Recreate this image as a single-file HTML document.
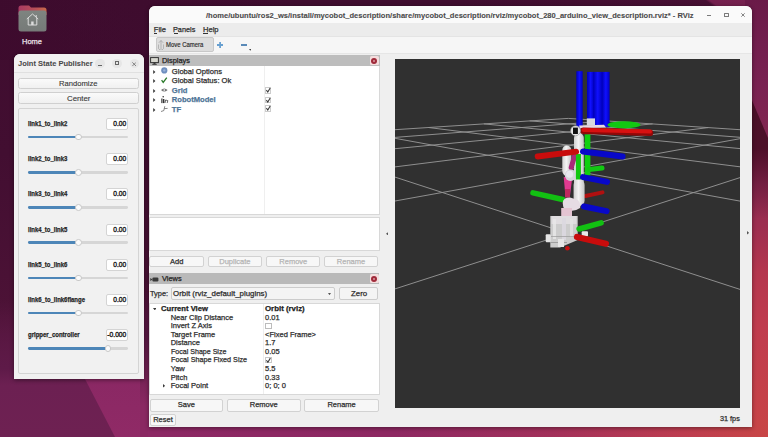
<!DOCTYPE html>
<html><head><meta charset="utf-8">
<style>
*{margin:0;padding:0;box-sizing:border-box}
html,body{width:768px;height:437px;overflow:hidden}
body{position:relative;font-family:"Liberation Sans",sans-serif;color:#222;background:#4a1238}
.a{position:absolute}
.t{position:absolute;white-space:nowrap;line-height:1;transform-origin:0 50%;-webkit-text-stroke:0.25px currentColor}
</style></head><body>
<div class="a" style="left:0;top:0;width:768px;height:437px;background:linear-gradient(180deg,#3f0d2f 0%,#420e31 35%,#4c1236 70%,#5a1640 85%,#6a1e4e 100%)"></div>
<div class="a" style="left:0;top:0;width:768px;height:60px;background:linear-gradient(90deg,rgba(60,10,44,.6) 0%,rgba(60,10,44,0) 40%,rgba(80,18,56,.0) 60%,rgba(80,18,56,.5) 100%)"></div>
<div class="a" style="left:600px;top:0;width:168px;height:80px;background:radial-gradient(circle 131px at 190px -100px,#7e2454 0%,#74204e 98%,rgba(70,16,52,0) 100%)"></div>
<div class="a" style="left:745px;top:0;width:23px;height:437px;background:linear-gradient(180deg,#6a1a48 0%,#721e4e 10%,#7a2252 20%,#82264f 32%,#8c2a50 42%,#9e2e50 52%,#b4364e 62%,#c03c4e 75%,#c84446 100%)"></div>
<div class="a" style="left:745px;top:0;width:23px;height:437px;background:linear-gradient(180deg,rgba(70,14,38,.3) 19%,#4a1028 23%,#4e1029 34%,rgba(90,20,50,.5) 42%,rgba(140,40,70,0) 50%);clip-path:polygon(0 84px,23px 138px,23px 437px,0 437px)"></div>
<div class="a" style="left:0;top:300px;width:150px;height:137px;background:linear-gradient(180deg,rgba(90,24,68,0) 0%,#5e1a48 50%,#6c2052 62%,#6e2152 100%)"></div>
<div class="a" style="left:0;top:379px;width:150px;height:58px;background:linear-gradient(180deg,#8a2864,#902a66);clip-path:polygon(85px 0,150px 0,150px 58px,115px 58px)"></div>
<div class="a" style="left:140px;top:280px;width:10px;height:157px;background:linear-gradient(180deg,rgba(74,18,54,0) 0%,#5a1844 35%,#7a2458 65%,#8a2862 80%)"></div>
<div class="a" style="left:148px;top:420px;width:620px;height:17px;background:linear-gradient(90deg,#8c2864 0%,#8e2862 40%,#a2305a 65%,#bc3c50 85%,#c84646 100%)"></div>
<svg class="a" style="left:17.5px;top:5px" width="29" height="27" viewBox="0 0 29 27">
<defs><linearGradient id="ft" x1="0" x2="1"><stop offset="0" stop-color="#a83a62"></stop><stop offset=".6" stop-color="#b85058"></stop><stop offset="1" stop-color="#c86a4a"></stop></linearGradient>
<linearGradient id="fb" x1="0" x2="0" y1="0" y2="1"><stop offset="0" stop-color="#7e8480"></stop><stop offset="1" stop-color="#767a78"></stop></linearGradient></defs>
<path d="M0.5 3 Q0.5 0.5 3 0.5 L11 0.5 L13 2.5 L26 2.5 Q28.5 2.5 28.5 5 L28.5 10 L0.5 10 Z" fill="url(#ft)"></path>
<rect x="0.5" y="5.5" width="28" height="21" rx="2.5" fill="url(#fb)"></rect>
<path d="M8.8 14 L14.5 9 L20.2 14 M10.2 13 V20 H18.8 V13 M18.2 10 V12" stroke="#dcdcdc" stroke-width="1" fill="none"></path>
<rect x="13.2" y="16.5" width="2.4" height="3.5" fill="#dcdcdc"></rect>
</svg>
<div class="t" style="left: 21.9px; top: 37.5px; font-size: 7.6px; font-weight: normal; color: rgb(236, 228, 234); transform: scaleX(0.985);">Home</div>
<div class="a" style="left:13.5px;top:54px;width:130px;height:324.8px;background:#f0f0f0;border-radius:6px 6px 0 0;box-shadow:0 1px 4px rgba(0,0,0,.45)"></div>
<div class="a" style="left:13.5px;top:54px;width:130px;height:18.6px;background:#f1f1f1;border-radius:6px 6px 0 0;border-bottom:0.8px solid #e0e0e0"></div>
<div class="t" style="left: 17.8px; top: 60px; font-size: 7.6px; font-weight: bold; color: rgb(72, 72, 72); -webkit-text-stroke: 0.05px currentcolor; transform: scaleX(0.987);">Joint State Publisher</div>
<div class="a" style="left:95.4px;top:58.8px;width:9.2px;height:9.2px;border-radius:50%;background:#e6e6e6"></div>
<div class="a" style="left:112.4px;top:58.8px;width:9.2px;height:9.2px;border-radius:50%;background:#e6e6e6"></div>
<div class="a" style="left:129.6px;top:58.8px;width:9.2px;height:9.2px;border-radius:50%;background:#e6e6e6"></div>
<div class="a" style="left:98.3px;top:64.6px;width:3.6px;height:0.8px;background:#666"></div>
<div class="a" style="left:115px;top:61.4px;width:4px;height:4px;border:0.7px solid #666"></div>
<svg class="a" style="left:132px;top:61.5px" width="4.4" height="4.4" viewBox="0 0 4 4"><path d="M0.3 0.3 L3.7 3.7 M3.7 0.3 L0.3 3.7" stroke="#666" stroke-width="0.7"></path></svg>
<div class="a" style="left:18.2px;top:77.5px;width:120.5px;height:11.799999999999997px;background:linear-gradient(#fafafa,#f0f0f0);border:1px solid #d0d0d0;border-radius:2.5px"></div>
<div class="t" style="left: 59.4px; top: 79.9px; font-size: 7.6px; font-weight: normal; color: rgb(56, 56, 56); -webkit-text-stroke: 0.12px currentcolor; transform: scaleX(1.003);">Randomize</div>
<div class="a" style="left:18.2px;top:92.2px;width:120.5px;height:12.0px;background:linear-gradient(#fafafa,#f0f0f0);border:1px solid #d0d0d0;border-radius:2.5px"></div>
<div class="t" style="left: 66.6px; top: 94.7px; font-size: 7.6px; font-weight: normal; color: rgb(56, 56, 56); -webkit-text-stroke: 0.12px currentcolor; transform: scaleX(1.03);">Center</div>
<div class="a" style="left:18.2px;top:108px;width:120.5px;height:266px;border:0.8px solid #d4d4d4;border-radius:2px;background:#f1f1f1"></div>
<div class="t" style="left: 28.1px; top: 120.85px; font-size: 6.7px; font-weight: bold; color: rgb(38, 38, 38); transform: scaleX(0.889);">link1_to_link2</div>
<div class="a" style="left:105.7px;top:118px;width:22.5px;height:12px;background:#fff;border:1px solid #d4d4d4;border-radius:2px"></div>
<div class="t" style="left:126.3px;top:120.85px;font-size:6.7px;font-weight:normal;color:#222;transform:translateX(-100%);-webkit-text-stroke:0.35px currentColor;">0.00</div>
<div class="a" style="left:28.1px;top:135.6px;width:100px;height:2.8px;background:#d6d6d6;border-radius:1.4px"></div>
<div class="a" style="left:28.1px;top:135.6px;width:50.199999999999996px;height:2.8px;background:#4d86b8;border-radius:1.4px"></div>
<div class="a" style="left:74.89999999999999px;top:133.6px;width:6.8px;height:6.8px;border-radius:50%;background:#fbfbfb;border:0.6px solid #c8c8c8"></div>
<div class="t" style="left: 28.1px; top: 156.25px; font-size: 6.7px; font-weight: bold; color: rgb(38, 38, 38); transform: scaleX(0.889);">link2_to_link3</div>
<div class="a" style="left:105.7px;top:153.4px;width:22.5px;height:12px;background:#fff;border:1px solid #d4d4d4;border-radius:2px"></div>
<div class="t" style="left:126.3px;top:156.25px;font-size:6.7px;font-weight:normal;color:#222;transform:translateX(-100%);-webkit-text-stroke:0.35px currentColor;">0.00</div>
<div class="a" style="left:28.1px;top:171.0px;width:100px;height:2.8px;background:#d6d6d6;border-radius:1.4px"></div>
<div class="a" style="left:28.1px;top:171.0px;width:50.199999999999996px;height:2.8px;background:#4d86b8;border-radius:1.4px"></div>
<div class="a" style="left:74.89999999999999px;top:169.0px;width:6.8px;height:6.8px;border-radius:50%;background:#fbfbfb;border:0.6px solid #c8c8c8"></div>
<div class="t" style="left: 28.1px; top: 191.25px; font-size: 6.7px; font-weight: bold; color: rgb(38, 38, 38); transform: scaleX(0.889);">link3_to_link4</div>
<div class="a" style="left:105.7px;top:188.4px;width:22.5px;height:12px;background:#fff;border:1px solid #d4d4d4;border-radius:2px"></div>
<div class="t" style="left:126.3px;top:191.25px;font-size:6.7px;font-weight:normal;color:#222;transform:translateX(-100%);-webkit-text-stroke:0.35px currentColor;">0.00</div>
<div class="a" style="left:28.1px;top:206.0px;width:100px;height:2.8px;background:#d6d6d6;border-radius:1.4px"></div>
<div class="a" style="left:28.1px;top:206.0px;width:50.199999999999996px;height:2.8px;background:#4d86b8;border-radius:1.4px"></div>
<div class="a" style="left:74.89999999999999px;top:204.0px;width:6.8px;height:6.8px;border-radius:50%;background:#fbfbfb;border:0.6px solid #c8c8c8"></div>
<div class="t" style="left: 28.1px; top: 226.65px; font-size: 6.7px; font-weight: bold; color: rgb(38, 38, 38); transform: scaleX(0.889);">link4_to_link5</div>
<div class="a" style="left:105.7px;top:223.8px;width:22.5px;height:12px;background:#fff;border:1px solid #d4d4d4;border-radius:2px"></div>
<div class="t" style="left:126.3px;top:226.65px;font-size:6.7px;font-weight:normal;color:#222;transform:translateX(-100%);-webkit-text-stroke:0.35px currentColor;">0.00</div>
<div class="a" style="left:28.1px;top:241.1px;width:100px;height:2.8px;background:#d6d6d6;border-radius:1.4px"></div>
<div class="a" style="left:28.1px;top:241.1px;width:50.199999999999996px;height:2.8px;background:#4d86b8;border-radius:1.4px"></div>
<div class="a" style="left:74.89999999999999px;top:239.1px;width:6.8px;height:6.8px;border-radius:50%;background:#fbfbfb;border:0.6px solid #c8c8c8"></div>
<div class="t" style="left: 28.1px; top: 261.85px; font-size: 6.7px; font-weight: bold; color: rgb(38, 38, 38); transform: scaleX(0.889);">link5_to_link6</div>
<div class="a" style="left:105.7px;top:259px;width:22.5px;height:12px;background:#fff;border:1px solid #d4d4d4;border-radius:2px"></div>
<div class="t" style="left:126.3px;top:261.85px;font-size:6.7px;font-weight:normal;color:#222;transform:translateX(-100%);-webkit-text-stroke:0.35px currentColor;">0.00</div>
<div class="a" style="left:28.1px;top:276.70000000000005px;width:100px;height:2.8px;background:#d6d6d6;border-radius:1.4px"></div>
<div class="a" style="left:28.1px;top:276.70000000000005px;width:50.199999999999996px;height:2.8px;background:#4d86b8;border-radius:1.4px"></div>
<div class="a" style="left:74.89999999999999px;top:274.70000000000005px;width:6.8px;height:6.8px;border-radius:50%;background:#fbfbfb;border:0.6px solid #c8c8c8"></div>
<div class="t" style="left: 28.1px; top: 297.25px; font-size: 6.7px; font-weight: bold; color: rgb(38, 38, 38); transform: scaleX(0.891);">link6_to_link6flange</div>
<div class="a" style="left:105.7px;top:294.4px;width:22.5px;height:12px;background:#fff;border:1px solid #d4d4d4;border-radius:2px"></div>
<div class="t" style="left:126.3px;top:297.25px;font-size:6.7px;font-weight:normal;color:#222;transform:translateX(-100%);-webkit-text-stroke:0.35px currentColor;">0.00</div>
<div class="a" style="left:28.1px;top:311.70000000000005px;width:100px;height:2.8px;background:#d6d6d6;border-radius:1.4px"></div>
<div class="a" style="left:28.1px;top:311.70000000000005px;width:50.199999999999996px;height:2.8px;background:#4d86b8;border-radius:1.4px"></div>
<div class="a" style="left:74.89999999999999px;top:309.70000000000005px;width:6.8px;height:6.8px;border-radius:50%;background:#fbfbfb;border:0.6px solid #c8c8c8"></div>
<div class="t" style="left: 28.1px; top: 332.25px; font-size: 6.7px; font-weight: bold; color: rgb(38, 38, 38); transform: scaleX(0.895);">gripper_controller</div>
<div class="a" style="left:105.7px;top:329.4px;width:22.5px;height:12px;background:#fff;border:1px solid #d4d4d4;border-radius:2px"></div>
<div class="t" style="left:126.3px;top:332.25px;font-size:6.7px;font-weight:normal;color:#222;transform:translateX(-100%);-webkit-text-stroke:0.35px currentColor;">-0.000</div>
<div class="a" style="left:28.1px;top:347.1px;width:100px;height:2.8px;background:#d6d6d6;border-radius:1.4px"></div>
<div class="a" style="left:28.1px;top:347.1px;width:80.0px;height:2.8px;background:#4d86b8;border-radius:1.4px"></div>
<div class="a" style="left:104.69999999999999px;top:345.1px;width:6.8px;height:6.8px;border-radius:50%;background:#fbfbfb;border:0.6px solid #c8c8c8"></div>
<div class="a" style="left:148.5px;top:5.5px;width:603.5px;height:421px;background:#efefef;border-radius:6px 6px 0 0;box-shadow:0 1px 4px rgba(0,0,0,.45)"></div>
<div class="a" style="left:148.5px;top:5.5px;width:603.5px;height:17px;background:#fafafa;border-radius:6px 6px 0 0"></div>
<div class="t" style="left: 206.4px; top: 12px; font-size: 8px; font-weight: bold; color: rgb(74, 74, 74); -webkit-text-stroke: 0.1px currentcolor; transform: scaleX(0.941);">/home/ubuntu/ros2_ws/install/mycobot_description/share/mycobot_description/rviz/mycobot_280_arduino_view_description.rviz* - RViz</div>
<div class="a" style="left:707px;top:15px;width:4.3px;height:0.7px;background:#7a7a7a"></div>
<div class="a" style="left:724px;top:12.6px;width:4.8px;height:4.2px;border:0.6px solid #7a7a7a;border-radius:0.5px"></div>
<svg class="a" style="left:741.4px;top:12.5px" width="4" height="4" viewBox="0 0 4 4"><path d="M0.3 0.3 L3.7 3.7 M3.7 0.3 L0.3 3.7" stroke="#666" stroke-width="0.8"></path></svg>
<div class="a" style="left:148.5px;top:22.5px;width:603.5px;height:13px;background:#ececec"></div>
<div class="t" style="left: 153.75px; top: 26.2px; font-size: 7.6px; font-weight: normal; color: rgb(46, 46, 46); transform: scaleX(1);">File</div>
<div class="t" style="left: 173.3px; top: 26.2px; font-size: 7.6px; font-weight: normal; color: rgb(46, 46, 46); transform: scaleX(0.961);">Panels</div>
<div class="t" style="left: 202.9px; top: 26.2px; font-size: 7.6px; font-weight: normal; color: rgb(46, 46, 46); transform: scaleX(0.994);">Help</div>
<div class="a" style="left:153.9px;top:33.4px;width:3.6px;height:0.7px;background:#333"></div>
<div class="a" style="left:173.5px;top:33.4px;width:4.2px;height:0.7px;background:#333"></div>
<div class="a" style="left:203.1px;top:33.4px;width:4.6px;height:0.7px;background:#333"></div>
<div class="a" style="left:148.5px;top:35.5px;width:603.5px;height:18.8px;background:#f6f6f6;border-top:0.8px solid #e4e4e4;border-bottom:0.8px solid #e6e6e6"></div>
<div class="a" style="left:155.6px;top:37.2px;width:58.1px;height:15.2px;background:#dddddd;border:1px solid #c8c8c8;border-radius:2px"></div>
<div class="t" style="left: 165.6px; top: 41.9px; font-size: 6.6px; font-weight: normal; color: rgb(42, 42, 42); -webkit-text-stroke: 0.15px currentcolor; transform: scaleX(0.902);">Move Camera</div>
<svg class="a" style="left:156.8px;top:39.5px" width="8" height="11" viewBox="0 0 8 11" fill="none" stroke="#8a8a8a" stroke-width="0.5"><path d="M4 0.5 L4 10 M1.8 2.8 L4 0.5 L6.2 2.8 M1.5 4.5 L1.5 8.5 L3 10 M6.5 4.5 L6.5 8.5 L5 10"></path></svg>
<svg class="a" style="left:217px;top:41.7px" width="6.2" height="6" viewBox="0 0 6.2 6"><path d="M2.2 0 H4 V2.1 H6.2 V3.9 H4 V6 H2.2 V3.9 H0 V2.1 H2.2Z" fill="#68a0d0"></path></svg>
<div class="a" style="left:240.6px;top:44px;width:6.5px;height:1.6px;background:#5a8ab8"></div>
<svg class="a" style="left:248.6px;top:49.4px" width="2.6" height="1.8" viewBox="0 0 2.6 1.8"><path d="M0 0 L2.6 0 L1.3 1.8Z" fill="#444"></path></svg>
<div class="a" style="left:148.5px;top:55.3px;width:231px;height:10.7px;background:#bdbdbd"></div>
<div class="t" style="left: 162.1px; top: 56.95px; font-size: 7.5px; font-weight: normal; color: rgb(34, 34, 34); transform: scaleX(0.986);">Displays</div>
<svg class="a" style="left:150px;top:56.8px" width="9" height="8" viewBox="0 0 9 8"><rect x="0.6" y="0.6" width="7.8" height="5" fill="#d8d8d0" stroke="#333" stroke-width="1"></rect><rect x="3.5" y="5.6" width="2" height="1.3" fill="#333"></rect><rect x="2.3" y="6.8" width="4.4" height="1" fill="#333"></rect></svg>
<div class="a" style="left:369.6px;top:56px;width:9px;height:9px;border-radius:1.5px;background:#f4dede"></div>
<div class="a" style="left:371.1px;top:57.5px;width:6px;height:6px;border-radius:50%;background:#a02a3a"></div>
<div class="a" style="left:373.1px;top:59.5px;width:2px;height:2px;border-radius:50%;background:#d89aa0"></div>
<div class="a" style="left:148.5px;top:66px;width:231px;height:148.8px;background:#fff;border:1px solid #d8d8d8;border-top:none"></div>
<div class="a" style="left:263.5px;top:66px;width:0.8px;height:148px;background:#efefef"></div>
<svg class="a" style="left:160px;top:66px" width="10" height="48" viewBox="0 0 10 48"><circle cx="4.3" cy="4.4" r="3.1" fill="#6f8fbf"></circle><circle cx="4.3" cy="4.4" r="1.2" fill="#9ab4dc"></circle><path d="M1.6 14.2 L3.2 16.4 L6.8 11.6" stroke="#2a7a2a" stroke-width="1.3" fill="none"></path><path d="M1 24 Q4.2 21 7.6 24 Q4.2 27 1 24Z" fill="#707070"></path><circle cx="4.3" cy="24" r="0.9" fill="#ddd"></circle><circle cx="3.2" cy="30.8" r="0.8" fill="#333"></circle><rect x="1.3" y="32.5" width="1.2" height="4.6" fill="#333"></rect><rect x="3" y="33" width="1.4" height="4.1" fill="#333"></rect><path d="M5 37 L5.6 34 L7.8 34.6 L7.2 37" stroke="#444" stroke-width="0.8" fill="none"></path><path d="M1 45.5 L3.8 44.6 L4.8 40.2 M4.3 42.6 L7.6 42.4" stroke="#555" stroke-width="0.7" fill="none"></path></svg>
<svg class="a" style="left:152.8px;top:69.60px" width="3" height="4" viewBox="0 0 3 4"><path d="M0.2 0 L2.4 2 L0.2 4Z" fill="#3a3a3a"></path></svg>
<div class="t" style="left:171.8px;top:67.70px;font-size:7.6px;font-weight:normal;color:#2e2e2e;">Global Options</div>
<svg class="a" style="left:152.8px;top:79.10px" width="3" height="4" viewBox="0 0 3 4"><path d="M0.2 0 L2.4 2 L0.2 4Z" fill="#3a3a3a"></path></svg>
<div class="t" style="left:171.8px;top:77.20px;font-size:7.6px;font-weight:normal;color:#2e2e2e;">Global Status: Ok</div>
<svg class="a" style="left:152.8px;top:88.70px" width="3" height="4" viewBox="0 0 3 4"><path d="M0.2 0 L2.4 2 L0.2 4Z" fill="#3a3a3a"></path></svg>
<div class="t" style="left:171.8px;top:86.80px;font-size:7.6px;font-weight:bold;color:#4f7597;">Grid</div>
<svg class="a" style="left:152.8px;top:98.20px" width="3" height="4" viewBox="0 0 3 4"><path d="M0.2 0 L2.4 2 L0.2 4Z" fill="#3a3a3a"></path></svg>
<div class="t" style="left:171.8px;top:96.30px;font-size:7.6px;font-weight:bold;color:#4f7597;">RobotModel</div>
<svg class="a" style="left:152.8px;top:107.70px" width="3" height="4" viewBox="0 0 3 4"><path d="M0.2 0 L2.4 2 L0.2 4Z" fill="#3a3a3a"></path></svg>
<div class="t" style="left:171.8px;top:105.80px;font-size:7.6px;font-weight:bold;color:#4f7597;">TF</div>
<div class="a" style="left:265.1px;top:87.39999999999999px;width:6.4px;height:6.4px;background:#fff;border:0.7px solid #cccccc"></div>
<svg class="a" style="left:265.1px;top:87.40px" width="6.4" height="6.4" viewBox="0 0 6.4 6.4"><path d="M1.4 3.1 L2.8 5.1 L5.2 1.1" stroke="#3a3a3a" stroke-width="1.05" fill="none"></path></svg>
<div class="a" style="left:265.1px;top:96.6px;width:6.4px;height:6.4px;background:#fff;border:0.7px solid #cccccc"></div>
<svg class="a" style="left:265.1px;top:96.60px" width="6.4" height="6.4" viewBox="0 0 6.4 6.4"><path d="M1.4 3.1 L2.8 5.1 L5.2 1.1" stroke="#3a3a3a" stroke-width="1.05" fill="none"></path></svg>
<div class="a" style="left:265.1px;top:105.2px;width:6.4px;height:6.4px;background:#fff;border:0.7px solid #cccccc"></div>
<svg class="a" style="left:265.1px;top:105.20px" width="6.4" height="6.4" viewBox="0 0 6.4 6.4"><path d="M1.4 3.1 L2.8 5.1 L5.2 1.1" stroke="#3a3a3a" stroke-width="1.05" fill="none"></path></svg>
<div class="a" style="left:148.5px;top:217.3px;width:231px;height:33.3px;background:#fff;border:1px solid #d8d8d8"></div>
<div class="a" style="left:149.2px;top:255.5px;width:54.900000000000006px;height:11.8px;background:#f7f7f7;border:0.8px solid #d2d2d2;border-radius:2px"></div>
<div class="t" style="left:176.64999999999998px;top:257.65px;font-size:7.5px;font-weight:normal;color:#2e2e2e;transform:translateX(-50%)">Add</div>
<div class="a" style="left:207.8px;top:255.5px;width:54.19999999999999px;height:11.8px;background:#f7f7f7;border:0.8px solid #d2d2d2;border-radius:2px"></div>
<div class="t" style="left:234.9px;top:257.65px;font-size:7.5px;font-weight:normal;color:#b4b4b4;transform:translateX(-50%)">Duplicate</div>
<div class="a" style="left:266.4px;top:255.5px;width:53.80000000000001px;height:11.8px;background:#f7f7f7;border:0.8px solid #d2d2d2;border-radius:2px"></div>
<div class="t" style="left:293.29999999999995px;top:257.65px;font-size:7.5px;font-weight:normal;color:#b4b4b4;transform:translateX(-50%)">Remove</div>
<div class="a" style="left:323.9px;top:255.5px;width:54.200000000000045px;height:11.8px;background:#f7f7f7;border:0.8px solid #d2d2d2;border-radius:2px"></div>
<div class="t" style="left:351.0px;top:257.65px;font-size:7.5px;font-weight:normal;color:#b4b4b4;transform:translateX(-50%)">Rename</div>
<div class="a" style="left:148.5px;top:273.1px;width:230.2px;height:10.8px;background:#b9b9b9"></div>
<div class="t" style="left: 161.9px; top: 274.75px; font-size: 7.5px; font-weight: normal; color: rgb(34, 34, 34); transform: scaleX(0.985);">Views</div>
<svg class="a" style="left:150.3px;top:276.8px" width="9" height="5" viewBox="0 0 9 5"><rect x="2.4" y="0.4" width="6" height="4" rx="1.2" fill="#3a3a3a"></rect><path d="M0.3 1 L2.6 2.5 L0.3 4Z" fill="#3a3a3a"></path></svg>
<div class="a" style="left:369.6px;top:274.2px;width:9px;height:9px;border-radius:1.5px;background:#f4dede"></div>
<div class="a" style="left:371.1px;top:275.7px;width:6px;height:6px;border-radius:50%;background:#a02a3a"></div>
<div class="a" style="left:373.1px;top:277.7px;width:2px;height:2px;border-radius:50%;background:#d89aa0"></div>
<div class="t" style="left: 149.8px; top: 289.55px; font-size: 7.5px; font-weight: normal; color: rgb(46, 46, 46); transform: scaleX(0.983);">Type:</div>
<div class="a" style="left:170.7px;top:287.4px;width:164.8px;height:12.2px;background:#f4f4f4;border:1px solid #cccccc;border-radius:2px"></div>
<div class="t" style="left: 173.4px; top: 289.55px; font-size: 7.5px; font-weight: normal; color: rgb(46, 46, 46); transform: scaleX(1.05);">Orbit (rviz_default_plugins)</div>
<svg class="a" style="left:328.4px;top:292.6px" width="3" height="2.2" viewBox="0 0 3 2.2"><path d="M0 0 L3 0 L1.5 2.2Z" fill="#555"></path></svg>
<div class="a" style="left:338.7px;top:287.4px;width:39.3px;height:12.2px;background:#f4f4f4;border:1px solid #cccccc;border-radius:2px"></div>
<div class="t" style="left: 350.5px; top: 289.55px; font-size: 7.5px; font-weight: normal; color: rgb(46, 46, 46); transform: scaleX(1.047);">Zero</div>
<div class="a" style="left:149.0px;top:303.2px;width:231px;height:91.6px;background:#fff;border:1px solid #d8d8d8"></div>
<div class="a" style="left:263px;top:304px;width:0.8px;height:90px;background:#eeeeee"></div>
<svg class="a" style="left:152.6px;top:307.50px" width="3.6" height="2.4" viewBox="0 0 3.6 2.4"><path d="M0 0 L3.6 0 L1.8 2.4Z" fill="#3a3a3a"></path></svg>
<div class="t" style="left: 160.5px; top: 304.8px; font-size: 7.6px; font-weight: bold; color: rgb(34, 34, 34); transform: scaleX(1.004);">Current View</div>
<div class="t" style="left: 265.1px; top: 304.8px; font-size: 7.6px; font-weight: bold; color: rgb(34, 34, 34); transform: scaleX(1.034);">Orbit (rviz)</div>
<div class="t" style="left:170.7px;top:313.55px;font-size:7.5px;font-weight:normal;color:#2e2e2e;">Near Clip Distance</div>
<div class="t" style="left:265.1px;top:313.55px;font-size:7.5px;font-weight:normal;color:#2e2e2e;">0.01</div>
<div class="t" style="left:170.7px;top:322.15px;font-size:7.5px;font-weight:normal;color:#2e2e2e;">Invert Z Axis</div>
<div class="a" style="left:265.1px;top:322.59999999999997px;width:6.6px;height:6.6px;background:#fff;border:0.8px solid #bcbcbc"></div>
<div class="t" style="left:170.7px;top:330.75px;font-size:7.5px;font-weight:normal;color:#2e2e2e;">Target Frame</div>
<div class="t" style="left:265.1px;top:330.75px;font-size:7.5px;font-weight:normal;color:#2e2e2e;">&lt;Fixed Frame&gt;</div>
<div class="t" style="left:170.7px;top:339.25px;font-size:7.5px;font-weight:normal;color:#2e2e2e;">Distance</div>
<div class="t" style="left:265.1px;top:339.25px;font-size:7.5px;font-weight:normal;color:#2e2e2e;">1.7</div>
<div class="t" style="left: 170.7px; top: 347.85px; font-size: 7.5px; font-weight: normal; color: rgb(46, 46, 46); transform: scaleX(0.942);">Focal Shape Size</div>
<div class="t" style="left:265.1px;top:347.85px;font-size:7.5px;font-weight:normal;color:#2e2e2e;">0.05</div>
<div class="t" style="left: 170.7px; top: 356.45px; font-size: 7.5px; font-weight: normal; color: rgb(46, 46, 46); transform: scaleX(0.961);">Focal Shape Fixed Size</div>
<div class="a" style="left:265.2px;top:356.9px;width:6.6px;height:6.6px;background:#fff;border:0.7px solid #c8c8c8"></div>
<svg class="a" style="left:265.2px;top:356.90px" width="6.6" height="6.6" viewBox="0 0 6.4 6.4"><path d="M1.4 3.1 L2.8 5.1 L5.2 1.1" stroke="#3a3a3a" stroke-width="1.05" fill="none"></path></svg>
<div class="t" style="left:170.7px;top:365.05px;font-size:7.5px;font-weight:normal;color:#2e2e2e;">Yaw</div>
<div class="t" style="left:265.1px;top:365.05px;font-size:7.5px;font-weight:normal;color:#2e2e2e;">5.5</div>
<div class="t" style="left:170.7px;top:373.65px;font-size:7.5px;font-weight:normal;color:#2e2e2e;">Pitch</div>
<div class="t" style="left:265.1px;top:373.65px;font-size:7.5px;font-weight:normal;color:#2e2e2e;">0.33</div>
<div class="t" style="left:170.7px;top:382.05px;font-size:7.5px;font-weight:normal;color:#2e2e2e;">Focal Point</div>
<svg class="a" style="left:162.8px;top:384.00px" width="2.2" height="3.6" viewBox="0 0 2.2 3.6"><path d="M0 0 L2.2 1.8 L0 3.6Z" fill="#3a3a3a"></path></svg>
<div class="t" style="left:265.1px;top:382.05px;font-size:7.5px;font-weight:normal;color:#2e2e2e;">0; 0; 0</div>
<div class="a" style="left:149.7px;top:399.4px;width:73.30000000000001px;height:12.5px;background:#f7f7f7;border:0.8px solid #d2d2d2;border-radius:2px"></div>
<div class="t" style="left:186.35px;top:401.45px;font-size:7.5px;font-weight:normal;color:#2e2e2e;transform:translateX(-50%)">Save</div>
<div class="a" style="left:226.9px;top:399.4px;width:73.70000000000002px;height:12.5px;background:#f7f7f7;border:0.8px solid #d2d2d2;border-radius:2px"></div>
<div class="t" style="left:263.75px;top:401.45px;font-size:7.5px;font-weight:normal;color:#2e2e2e;transform:translateX(-50%)">Remove</div>
<div class="a" style="left:304.4px;top:399.4px;width:74.35000000000002px;height:12.5px;background:#f7f7f7;border:0.8px solid #d2d2d2;border-radius:2px"></div>
<div class="t" style="left:341.575px;top:401.45px;font-size:7.5px;font-weight:normal;color:#2e2e2e;transform:translateX(-50%)">Rename</div>
<div class="a" style="left:149.7px;top:414.4px;width:26.5px;height:11.6px;background:#f7f7f7;border:0.8px solid #d2d2d2;border-radius:2px"></div>
<div class="t" style="left:162.95px;top:416.45px;font-size:7.5px;font-weight:normal;color:#2e2e2e;transform:translateX(-50%)">Reset</div>
<div class="t" style="left:739.8px;top:414.55px;font-size:7.3px;font-weight:normal;color:#2e2e2e;transform:translateX(-100%)">31 fps</div>
<svg class="a" style="left:385.8px;top:231.6px" width="2.2" height="3.6" viewBox="0 0 2.2 3.6"><path d="M2.2 0 L0 1.8 L2.2 3.6Z" fill="#555"></path></svg>
<svg class="a" style="left:747.2px;top:231.4px" width="2.2" height="3.6" viewBox="0 0 2.2 3.6"><path d="M0 0 L2.2 1.8 L0 3.6Z" fill="#555"></path></svg>
<div class="a" style="left:395px;top:59px;width:345px;height:348.5px;background:#303030;overflow:hidden">
<svg width="345" height="348.5" style="position:absolute;left:0;top:0" stroke="#939393" stroke-width="0.95" fill="none">
<line x1="0.0" y1="70.7" x2="173.3" y2="59.4"></line>
<line x1="0.0" y1="78.4" x2="211.8" y2="61.9"></line>
<line x1="0.0" y1="89.7" x2="257.6" y2="64.9"></line>
<line x1="0.0" y1="107.9" x2="313.1" y2="68.6"></line>
<line x1="0.0" y1="142.0" x2="345.0" y2="79.7"></line>
<line x1="0.0" y1="229.9" x2="345.0" y2="118.6"></line>
<line x1="0.0" y1="118.1" x2="345.0" y2="230.4"></line>
<line x1="0.0" y1="79.3" x2="345.0" y2="142.1"></line>
<line x1="33.5" y1="68.5" x2="345.0" y2="107.8"></line>
<line x1="88.9" y1="64.9" x2="345.0" y2="89.6"></line>
<line x1="134.7" y1="61.9" x2="345.0" y2="78.3"></line>
<line x1="173.3" y1="59.4" x2="345.0" y2="70.7"></line>
</svg>
<svg width="345" height="348.5" style="position:absolute;left:0;top:0" viewBox="395 59 345 348.5" fill="none" stroke-linecap="round">
<defs>
<linearGradient id="gw" x1="0" x2="1" y1="0" y2="0"><stop offset="0" stop-color="#d0d0d0"></stop><stop offset=".45" stop-color="#f4f4f4"></stop><stop offset="1" stop-color="#c4c4c4"></stop></linearGradient>
<linearGradient id="gb" x1="0" x2="1" y1="0" y2="0"><stop offset="0" stop-color="#0000b8"></stop><stop offset=".5" stop-color="#1010ff"></stop><stop offset="1" stop-color="#0000c0"></stop></linearGradient>
</defs>
<!-- top blue Z axes -->
<rect x="576.3" y="71.2" width="6.4" height="57" fill="url(#gb)"></rect>
<rect x="587" y="71.9" width="7" height="52" fill="url(#gb)"></rect>
<rect x="593.4" y="71.9" width="8.6" height="54" fill="url(#gb)"></rect>
<rect x="602" y="71.9" width="7.6" height="55" fill="url(#gb)"></rect>
<!-- white block -->
<rect x="586.8" y="118.4" width="8.2" height="6.9" fill="#d8d8e0"></rect>
<!-- green disc -->
<ellipse cx="624" cy="124.8" rx="16.5" ry="3.6" fill="#12c812"></ellipse>
<!-- white column right (main vertical) -->
<rect x="574" y="133" width="9.8" height="73" rx="4.9" fill="url(#gw)"></rect>
<!-- white link left -->
<rect x="562.3" y="145.5" width="9" height="30" rx="4.5" fill="url(#gw)"></rect>
<!-- pink links -->
<line x1="575.3" y1="153.7" x2="571.2" y2="167.5" stroke="#a82878" stroke-width="5"></line>
<path d="M563.7 177 L572.3 177 L569.8 197 L565.5 197 Z" fill="#e03a90"></path>
<!-- elbow -->
<circle cx="570.6" cy="175.2" r="5.8" fill="#d4d4dc"></circle><circle cx="569.6" cy="174.2" r="3.5" fill="#e8e8ee"></circle>
<path d="M579 125.5 L604 124.8 L606 127.5 L580 128.6Z" fill="#e8d8e0"></path>
<!-- top red X axis -->
<line x1="583.5" y1="130.8" x2="650" y2="132.8" stroke="#900808" stroke-width="6.5"></line>
<line x1="583.5" y1="129.9" x2="650" y2="131.6" stroke="#d81010" stroke-width="4"></line>
<!-- joint ring -->
<circle cx="575.6" cy="130.8" r="5" fill="#e8e8e8" stroke="#909090" stroke-width="0.6"></circle>
<rect x="573" y="127.6" width="4.9" height="6.4" fill="#101010"></rect>
<!-- green vertical bars -->
<rect x="584.7" y="134.5" width="5.7" height="41" fill="#10d010"></rect>
<rect x="575.9" y="154" width="5" height="25.5" fill="#10c810"></rect>
<!-- blue bars -->
<line x1="583" y1="151.5" x2="622.6" y2="156.5" stroke="#0808c8" stroke-width="6"></line>
<line x1="583" y1="177.1" x2="607" y2="181.9" stroke="#0808c8" stroke-width="6"></line>
<!-- red upper-left bar -->
<line x1="537.6" y1="156.5" x2="576.2" y2="151.7" stroke="#c80c0c" stroke-width="5.8"></line>
<!-- green horizontal small -->
<line x1="589" y1="169.5" x2="602" y2="168" stroke="#12c812" stroke-width="5"></line>
<!-- red small middle -->
<line x1="585.5" y1="196" x2="602.5" y2="192.4" stroke="#b01010" stroke-width="4"></line>
<!-- green lower-left -->
<line x1="533" y1="192.9" x2="562.7" y2="199.5" stroke="#12c012" stroke-width="5.5"></line>
<!-- white column continue lower -->
<rect x="573.6" y="180" width="11" height="25.6" rx="5" fill="url(#gw)"></rect>
<!-- pink top of lower link -->
<rect x="565" y="189" width="5" height="8.5" fill="#c02860"></rect>
<!-- elbow lower -->
<path d="M562.7 203 Q563 197.6 570 197.6 L578 200 Q581.2 204 580 208 Q576 211 571 210.6 L565 210 Q562.7 207 562.7 203Z" fill="#e6dce4"></path>
<!-- blue lower bar -->
<line x1="584" y1="206.5" x2="606.6" y2="211.1" stroke="#0808c8" stroke-width="6"></line>
<!-- neck -->
<rect x="561.2" y="208" width="10.8" height="8.4" fill="#e4c4d2"></rect>
<!-- base -->
<path d="M550.3 216 L577.7 216 L577.7 240 L560 247.5 L550.3 247.5 Z" fill="#cccccc"></path>
<rect x="551.5" y="216" width="25" height="8" fill="#e0dde0"></rect>
<rect x="553" y="219" width="3" height="20" fill="#e8e8e8" opacity=".8"></rect>
<rect x="562" y="218" width="4" height="22" fill="#dcd8e0" opacity=".9"></rect>
<rect x="570" y="219" width="3" height="18" fill="#e4e4e4" opacity=".8"></rect>
<rect x="551" y="236" width="26" height="1" fill="#9a9a9a" opacity=".7"></rect>
<rect x="551" y="242" width="16" height="1" fill="#8a8a8a" opacity=".7"></rect>
<rect x="545.7" y="234.2" width="5.2" height="8" rx="1" fill="#e4e4e4"></rect>
<rect x="558" y="239" width="6" height="8" fill="#e6e6e6"></rect>
<rect x="581.7" y="231.3" width="6.3" height="5.1" rx="1" fill="#e8e8e8"></rect>
<!-- green lower bar -->
<line x1="579.1" y1="229" x2="601.1" y2="222.8" stroke="#12c012" stroke-width="5.5"></line>
<!-- red lower bar -->
<line x1="577" y1="237" x2="605.9" y2="243.8" stroke="#c80c0c" stroke-width="6.2"></line>
<circle cx="567.4" cy="248.3" r="2.3" fill="#c81010"></circle>

</svg>
</div>
</body></html>
